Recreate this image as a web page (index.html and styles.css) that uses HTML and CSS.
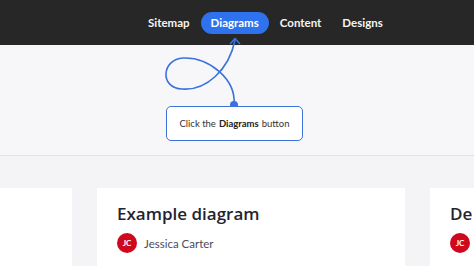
FILE: index.html
```html
<!DOCTYPE html>
<html lang="en">
<head>
    <meta charset="UTF-8">
    <meta name="viewport" content="width=device-width, initial-scale=1.0">
    <title>Diagrams</title>
    <link rel="stylesheet" href="styles.css">
</head>
<body>
    <!-- top nav -->
    <div class="topbar">
        <ul class="nav">
            <li class="nav-item">Sitemap</li>
            <li class="nav-item active">Diagrams</li>
            <li class="nav-item">Content</li>
            <li class="nav-item">Designs</li>
        </ul>
    </div>

    <!-- hint: curve + callout -->
    <div class="hint">
        <svg class="hint-curve" width="474" height="80" viewBox="0 30 474 80">
            <path d="M234 104 C236 80 210 57 183 58 C162 59 159 88 182 89 C206 91 229 70 235 40" fill="none" stroke="#3b73db" stroke-width="1.6"/>
            <path d="M230.5 43.5 L235 38.5 L239.5 43.5" fill="none" stroke="#3b73db" stroke-width="1.6" stroke-linecap="round" stroke-linejoin="round"/>
            <circle cx="234" cy="105" r="4" fill="#3b73db"/>
        </svg>
        <div class="callout">
            Click the <b>Diagrams</b> button
        </div>
    </div>

    <!-- cards -->
    <div class="board">
        <div class="card card-edge"></div>
        <div class="card">
            <h2 class="card-title">Example diagram</h2>
            <div class="owner">
                <span class="avatar">JC</span>
                <span class="owner-name">Jessica Carter</span>
            </div>
        </div>
        <div class="card">
            <h2 class="card-title">De</h2>
            <div class="owner">
                <span class="avatar">JC</span>
            </div>
        </div>
    </div>
</body>
</html>
```

FILE: styles.css
```css
* {
    margin: 0;
    padding: 0;
    list-style: none;
    box-sizing: border-box;
}
body {
    width: 474px;
    height: 266px;
    overflow: hidden;
    background-color: #f4f4f7;
    font-family: "Lato", "Open Sans", sans-serif;
}
.topbar {
    height: 45px;
    background-color: #272727;
    padding-left: 138px;
    display: flex;
    align-items: center;
}
.nav {
    display: flex;
    gap: 1px;
}
.nav-item {
    height: 22px;
    line-height: 22px;
    padding: 0 10px;
    border-radius: 11px;
    color: #f4f4f4;
    font-size: 11.5px;
    font-weight: 700;
}
.nav-item.active {
    background-color: #2f72ee;
    color: #fff;
}
.hint {
    position: relative;
    height: 111px;
    background-color: #f7f7f9;
    border-bottom: 1px solid #e2e2e7;
    padding-top: 61px;
}
.hint-curve {
    position: absolute;
    left: 0;
    top: -15px;
}
.callout {
    position: relative;
    width: 137px;
    height: 35px;
    margin-left: 166px;
    background-color: #fff;
    border: 1.5px solid #3b73db;
    border-radius: 5px;
    font-size: 9.5px;
    color: #333;
    display: flex;
    align-items: center;
    justify-content: center;
}
.callout b {
    margin: 0 3px;
    font-weight: 700;
    color: #222;
}
.board {
    display: flex;
    gap: 25px;
    padding-top: 32px;
}
.card {
    flex: 0 0 308px;
    height: 80px;
    background-color: #fff;
    padding: 14px 20px;
}
.card.card-edge {
    flex-basis: 72px;
}
.card-title {
    font-family: "Open Sans", sans-serif;
    font-size: 17px;
    font-weight: 600;
    color: #1f2430;
    line-height: 24px;
    white-space: nowrap;
}
.owner {
    display: flex;
    align-items: center;
    gap: 7px;
    margin-top: 7px;
}
.avatar {
    width: 20px;
    height: 20px;
    border-radius: 50%;
    background-color: #d0081e;
    color: #fff;
    font-size: 8px;
    font-weight: 700;
    display: flex;
    align-items: center;
    justify-content: center;
}
.owner-name {
    font-size: 11.5px;
    color: #4a4d57;
}
```
